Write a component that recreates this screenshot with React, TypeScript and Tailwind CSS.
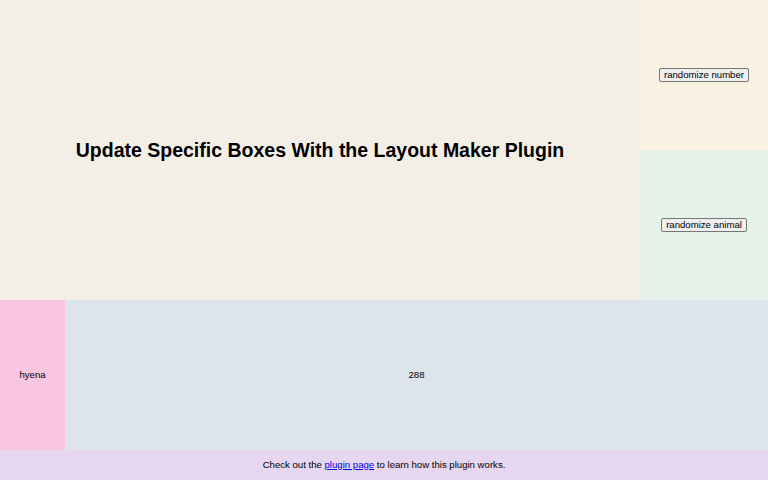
import { useState } from 'react';

const ANIMALS = ['hyena', 'otter', 'lemur', 'badger', 'falcon', 'gecko'];

function randomInt(max: number) {
  return Math.floor(Math.random() * max);
}

export default function App() {
  const [number, setNumber] = useState(288);
  const [animal, setAnimal] = useState('hyena');

  const buttonClass =
    'border border-[#767676] bg-[#efefef] px-[4px] py-0 text-[9.6px] leading-[12px] text-black rounded-[2px] cursor-pointer';

  return (
    <div className="flex h-[480px] w-[768px] flex-col font-['Liberation_Sans',Arial,sans-serif] text-[9.6px] text-black">
      <div className="flex h-[300px]">
        <div className="flex flex-1 items-center justify-center bg-[#f3efe7]">
          <h1 className="pt-[2px] text-[19.5px] font-bold leading-none">
            Update Specific Boxes With the Layout Maker Plugin
          </h1>
        </div>
        <div className="flex w-[128px] flex-col">
          <div className="flex flex-1 items-center justify-center bg-[#f9f1e2]">
            <button className={buttonClass} onClick={() => setNumber(randomInt(1000))}>
              randomize number
            </button>
          </div>
          <div className="flex flex-1 items-center justify-center bg-[#e5f2ea]">
            <button
              className={buttonClass}
              onClick={() => setAnimal(ANIMALS[randomInt(ANIMALS.length)])}
            >
              randomize animal
            </button>
          </div>
        </div>
      </div>
      <div className="flex h-[150px]">
        <div className="flex w-[65px] items-center justify-center bg-[#f8c6e1]">{animal}</div>
        <div className="flex flex-1 items-center justify-center bg-[#dde4eb]">{number}</div>
      </div>
      <div className="flex h-[30px] items-center justify-center bg-[#e6d6f0]">
        <p>
          Check out the{' '}
          <a href="#" className="text-[#0000ee] underline">
            plugin page
          </a>{' '}
          to learn how this plugin works.
        </p>
      </div>
    </div>
  );
}
